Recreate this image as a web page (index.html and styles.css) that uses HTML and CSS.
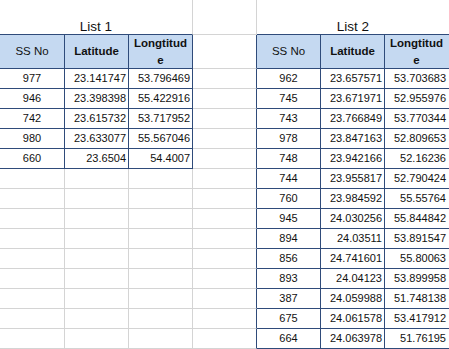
FILE: index.html
```html
<!DOCTYPE html>
<html>
<head>
<meta charset="utf-8">
<link rel="stylesheet" href="styles.css">
</head>
<body>
<div class="sheet">
  <div class="block left">
    <div class="title">List 1</div>
    <div class="row head"><div class="c a plain">SS No</div><div class="c">Latitude</div><div class="c">Longtitud<br>e</div></div>
    <div class="row data"><div class="c a id">977</div><div class="c num">23.141747</div><div class="c num">53.796469</div></div>
    <div class="row data"><div class="c a id">946</div><div class="c num">23.398398</div><div class="c num">55.422916</div></div>
    <div class="row data"><div class="c a id">742</div><div class="c num">23.615732</div><div class="c num">53.717952</div></div>
    <div class="row data"><div class="c a id">980</div><div class="c num">23.633077</div><div class="c num">55.567046</div></div>
    <div class="row data"><div class="c a id">660</div><div class="c num">23.6504</div><div class="c num">54.4007</div></div>
    <div class="row empty"><div class="c a"></div><div class="c"></div><div class="c"></div></div>
    <div class="row empty"><div class="c a"></div><div class="c"></div><div class="c"></div></div>
    <div class="row empty"><div class="c a"></div><div class="c"></div><div class="c"></div></div>
    <div class="row empty"><div class="c a"></div><div class="c"></div><div class="c"></div></div>
    <div class="row empty"><div class="c a"></div><div class="c"></div><div class="c"></div></div>
    <div class="row empty"><div class="c a"></div><div class="c"></div><div class="c"></div></div>
    <div class="row empty"><div class="c a"></div><div class="c"></div><div class="c"></div></div>
    <div class="row empty"><div class="c a"></div><div class="c"></div><div class="c"></div></div>
    <div class="row empty"><div class="c a"></div><div class="c"></div><div class="c"></div></div>
  </div>
  <div class="block gap">
    <div class="g t"></div>
    <div class="g h"></div>
    <div class="g"></div><div class="g"></div><div class="g"></div><div class="g"></div>
    <div class="g"></div><div class="g"></div><div class="g"></div><div class="g"></div>
    <div class="g"></div><div class="g"></div><div class="g"></div><div class="g"></div>
    <div class="g"></div><div class="g"></div>
  </div>
  <div class="block right">
    <div class="title">List 2</div>
    <div class="row head"><div class="c plain">SS No</div><div class="c">Latitude</div><div class="c">Longtitud<br>e</div></div>
    <div class="row data"><div class="c id">962</div><div class="c num">23.657571</div><div class="c num">53.703683</div></div>
    <div class="row data"><div class="c id">745</div><div class="c num">23.671971</div><div class="c num">52.955976</div></div>
    <div class="row data"><div class="c id">743</div><div class="c num">23.766849</div><div class="c num">53.770344</div></div>
    <div class="row data"><div class="c id">978</div><div class="c num">23.847163</div><div class="c num">52.809653</div></div>
    <div class="row data"><div class="c id">748</div><div class="c num">23.942166</div><div class="c num">52.16236</div></div>
    <div class="row data"><div class="c id">744</div><div class="c num">23.955817</div><div class="c num">52.790424</div></div>
    <div class="row data"><div class="c id">760</div><div class="c num">23.984592</div><div class="c num">55.55764</div></div>
    <div class="row data"><div class="c id">945</div><div class="c num">24.030256</div><div class="c num">55.844842</div></div>
    <div class="row data"><div class="c id">894</div><div class="c num">24.03511</div><div class="c num">53.891547</div></div>
    <div class="row data"><div class="c id">856</div><div class="c num">24.741601</div><div class="c num">55.80063</div></div>
    <div class="row data"><div class="c id">893</div><div class="c num">24.04123</div><div class="c num">53.899958</div></div>
    <div class="row data"><div class="c id">387</div><div class="c num">24.059988</div><div class="c num">51.748138</div></div>
    <div class="row data"><div class="c id">675</div><div class="c num">24.061578</div><div class="c num">53.417912</div></div>
    <div class="row data"><div class="c id">664</div><div class="c num">24.063978</div><div class="c num">51.76195</div></div>
  </div>
</div>
</body>
</html>
```

FILE: styles.css
```css
html, body {
  margin: 0;
  padding: 0;
  background: #ffffff;
}
body {
  font-family: "Liberation Sans", Arial, sans-serif;
  color: #111111;
  overflow: hidden;
  width: 449px;
  height: 349px;
}
.sheet {
  display: flex;
  align-items: flex-start;
}
.block {
  display: flex;
  flex-direction: column;
}
.left { width: 193px; }
.gap { width: 64px; }
.right { width: 192px; }

.title {
  box-sizing: border-box;
  height: 35px;
  border-bottom: 1px solid #2f4b7a;
  border-right: 1px solid #d4d4d4;
  display: flex;
  align-items: flex-end;
  justify-content: center;
  font-size: 13.5px;
  line-height: 13px;
  padding-bottom: 1px;
}
.right .title { border-right: none; }

.row { display: flex; }
.c {
  box-sizing: border-box;
  width: 64px;
  border-right: 1px solid #2f4b7a;
  border-bottom: 1px solid #2f4b7a;
  padding: 0 2px;
  font-size: 11px;
  white-space: nowrap;
}
.c.a { width: 65px; }
.right .row .c:last-child {
  border-right: none;
  padding-right: 3px;
}

.head .c {
  height: 34px;
  background: #c5d9f1;
  font-weight: bold;
  font-size: 11.5px;
  display: flex;
  align-items: center;
  justify-content: center;
  text-align: center;
  line-height: 17px;
}
.head .c.plain { font-weight: normal; }

.data .c {
  height: 20px;
  line-height: 19px;
}
.id { text-align: center; }
.num { text-align: right; }

.empty .c {
  height: 20px;
  border-right-color: #d4d4d4;
  border-bottom-color: #d4d4d4;
}

.g {
  box-sizing: border-box;
  height: 20px;
  border-right: 1px solid #2f4b7a;
  border-bottom: 1px solid #d4d4d4;
}
.g.t { height: 35px; border-right-color: #d4d4d4; }
.g.h { height: 34px; }
```
